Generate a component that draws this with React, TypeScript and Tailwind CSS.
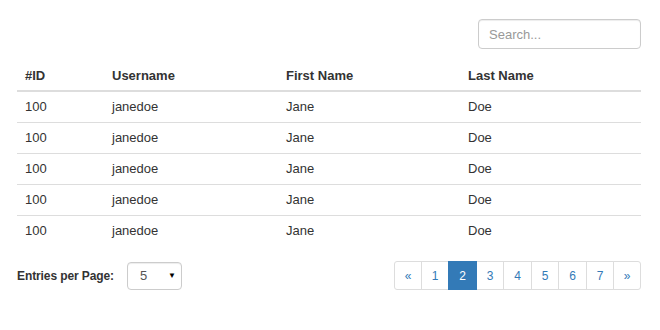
const ROWS = Array.from({ length: 5 }, () => ({
  id: 100,
  username: "janedoe",
  first: "Jane",
  last: "Doe",
}));

const PAGES = ["«", "1", "2", "3", "4", "5", "6", "7", "»"];

export default function App() {
  return (
    <div
      className="w-[660px] h-[330px] bg-white px-[17px] pt-[19px] text-[13px] text-[#333]"
      style={{ fontFamily: '"Liberation Sans", Arial, sans-serif' }}
    >
      <div className="flex justify-end pr-[2px]">
        <input
          type="text"
          placeholder="Search..."
          className="w-[163px] h-[30px] rounded-[4px] border border-[#ccc] px-[10px] text-[13px] text-[#555] placeholder:text-[#999] shadow-[inset_0_1px_1px_rgba(0,0,0,0.075)] outline-none"
        />
      </div>

      <table className="mt-[12px] w-[624px] border-collapse table-fixed">
        <colgroup>
          <col className="w-[87px]" />
          <col className="w-[174px]" />
          <col className="w-[182px]" />
          <col className="w-[181px]" />
        </colgroup>
        <thead>
          <tr className="border-b-2 border-[#ddd]">
            <th className="px-2 pt-2 pb-[7px] text-left font-bold leading-[14px]">#ID</th>
            <th className="px-2 pt-2 pb-[7px] text-left font-bold leading-[14px]">Username</th>
            <th className="px-2 pt-2 pb-[7px] text-left font-bold leading-[14px]">First Name</th>
            <th className="px-2 pt-2 pb-[7px] text-left font-bold leading-[14px]">Last Name</th>
          </tr>
        </thead>
        <tbody>
          {ROWS.map((r, i) => (
            <tr key={i} className={i > 0 ? "border-t border-[#ddd]" : ""}>
              <td className="px-2 py-2 leading-[14px]">{r.id}</td>
              <td className="px-2 py-2 leading-[14px]">{r.username}</td>
              <td className="px-2 py-2 leading-[14px]">{r.first}</td>
              <td className="px-2 py-2 leading-[14px]">{r.last}</td>
            </tr>
          ))}
        </tbody>
      </table>

      <div className="mt-[15px] flex items-center justify-between pr-[2px]">
        <div className="flex items-center">
          <span className="font-bold text-[12px] tracking-[-0.1px]">Entries per Page:</span>
          <div className="ml-[13px] w-[55px] h-[28px] rounded-[4px] border border-[#ccc] flex items-center justify-between pl-[12px] pr-[5px] shadow-[inset_0_1px_1px_rgba(0,0,0,0.075)]">
            <span className="text-[#555] text-[13px]">5</span>
            <span className="text-[8px] text-black">▼</span>
          </div>
        </div>

        <ul className="flex">
          {PAGES.map((p, i) => {
            const active = p === "2";
            return (
              <li
                key={i}
                className={
                  "h-[29px] flex items-center justify-center border text-[12px] " +
                  (i > 0 ? "-ml-px " : "") +
                  (i === 0 ? "rounded-l-[3px] " : "") +
                  (i === PAGES.length - 1 ? "rounded-r-[3px] " : "") +
                  (active
                    ? "bg-[#337ab7] border-[#337ab7] text-white relative"
                    : "bg-white border-[#ddd] text-[#337ab7]")
                }
                style={{ width: i === 2 || i === 4 || i === 6 ? 29 : 28 }}
              >
                {p}
              </li>
            );
          })}
        </ul>
      </div>
    </div>
  );
}
